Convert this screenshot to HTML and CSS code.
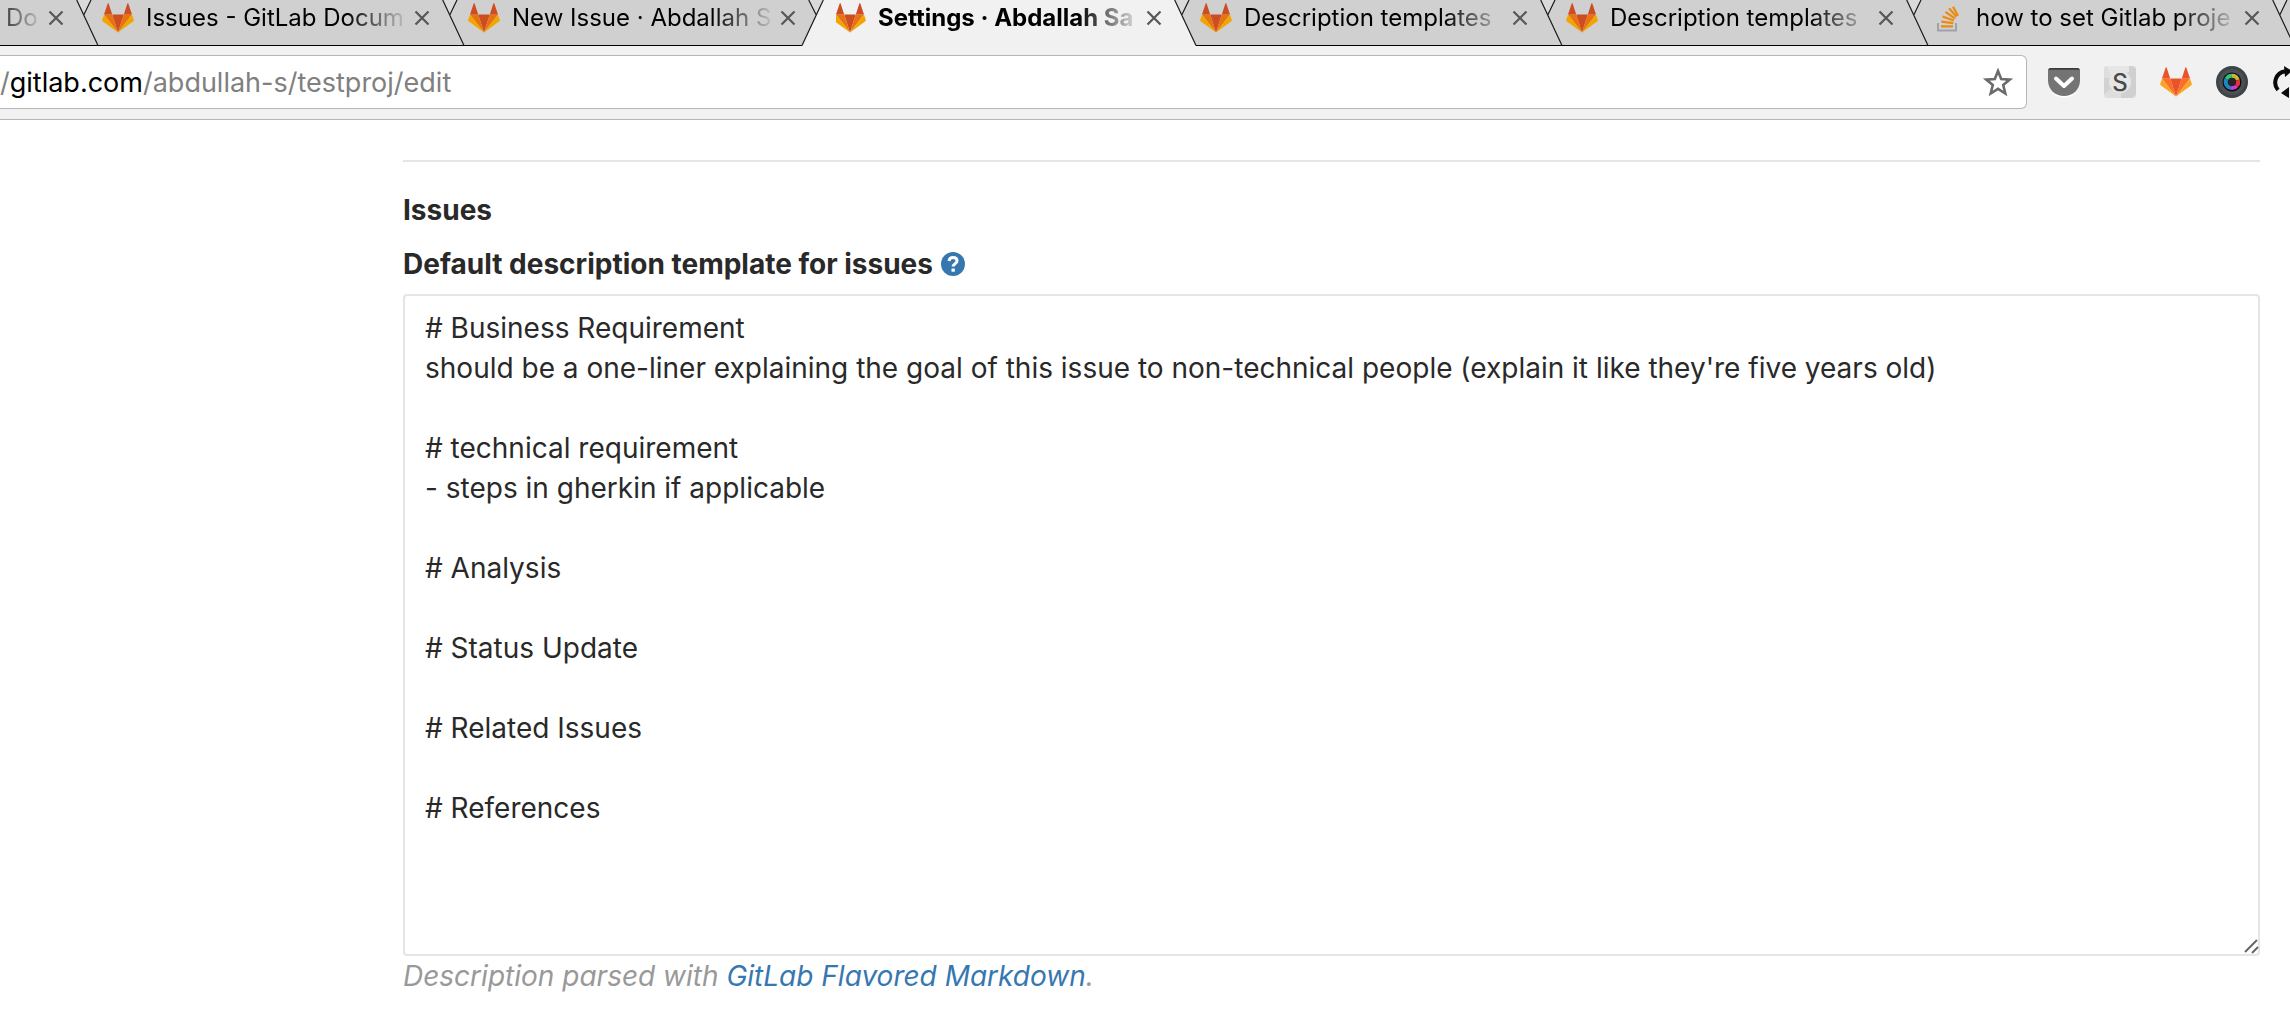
FILE: index.html
```
<!DOCTYPE html>
<html lang="en">
<head>
<meta charset="utf-8">
<title>Settings · Abdallah Samman / testproj · GitLab</title>
<link rel="stylesheet" href="styles.css">
</head>
<body>
<svg class="defs" aria-hidden="true">
  <symbol id="fox" viewBox="0 0 32 30">
    <path fill="var(--fox-dark)" d="M16 29.500 10.200 11.500H21.800z"/>
    <path fill="var(--fox-mid)" d="M16 29.500 10.200 11.500H2L16 29.500zM16 29.500 21.800 11.500H30z"/>
    <path fill="var(--fox-light)" d="M2 11.500.200 16.900c-.2.500 0 1 .4 1.300L16 29.500zM30 11.500l1.800 5.400c.2.500 0 1-.4 1.300L16 29.500z"/>
    <path fill="var(--fox-dark)" d="M2 11.500h8.200L6.700.700c-.2-.5-.9-.5-1.100 0zM30 11.500h-8.200L25.300.700c.2-.5.900-.5 1.100 0z"/>
  </symbol>
  <symbol id="close" viewBox="0 0 16 16">
    <path d="M1.500 1.500l13 13M14.500 1.500l-13 13" fill="none" stroke="#575757" stroke-width="2.200"/>
  </symbol>
  <symbol id="edge" viewBox="-20 0 40 46">
    <path d="M-7.300 0H7L0 14.500z" fill="#dadada"/>
    <path d="M-7.300 0 14 45.500M7 0 0 14.500" fill="none" stroke="#1a1a1a" stroke-width="1.200"/>
  </symbol>
  <symbol id="edge-open" viewBox="-20 0 40 46">
    <path d="M7.300 0-14 45.500V46H20V0z" fill="#f1f1f1"/>
    <path d="M-7.300 0H7L0 14.500z" fill="#dadada"/>
    <path d="M7.300 0-14 45.500M-7.300 0 0 14.500" fill="none" stroke="#1a1a1a" stroke-width="1.200"/>
  </symbol>
  <symbol id="edge-shut" viewBox="-20 0 40 46">
    <path d="M-20 0H-7.300L14 45.500V46H-20z" fill="#f1f1f1"/>
    <path d="M-7.300 0H7L0 14.500z" fill="#dadada"/>
    <path d="M-7.300 0 14 45.500M7 0 0 14.500" fill="none" stroke="#1a1a1a" stroke-width="1.200"/>
  </symbol>
  <symbol id="stack" viewBox="0 0 22 26">
    <path d="M1 17v7.500h18V17" fill="none" stroke="#9fa2ad" stroke-width="2"/>
    <path d="M4 20.300h12M4.300 15.600l12 1.500M5.500 10.500l11.300 4M8.500 5.800l9.500 6.800M12 2.300l7.500 8.500M16 .8l5 9" fill="none" stroke="#ec8b12" stroke-width="2.200"/>
  </symbol>
</svg>

<header class="browser">
  <nav class="tabs" aria-label="Open tabs">
    <div class="tab tab-cut">
      <a class="tab-title" href="#">Do</a>
      <button class="tab-close" aria-label="Close tab"><svg><use href="#close"/></svg></button>
    </div>
    <div class="tab">
      <svg class="edge"><use href="#edge"/></svg>
      <svg class="tab-icon"><use href="#fox"/></svg>
      <a class="tab-title" href="#">Issues - GitLab Docum</a>
      <button class="tab-close" aria-label="Close tab"><svg><use href="#close"/></svg></button>
    </div>
    <div class="tab">
      <svg class="edge"><use href="#edge"/></svg>
      <svg class="tab-icon"><use href="#fox"/></svg>
      <a class="tab-title" href="#">New Issue · Abdallah S</a>
      <button class="tab-close" aria-label="Close tab"><svg><use href="#close"/></svg></button>
    </div>
    <div class="tab tab-active">
      <svg class="edge"><use href="#edge-open"/></svg>
      <svg class="tab-icon"><use href="#fox"/></svg>
      <a class="tab-title" href="#" aria-current="page">Settings · Abdallah Sa</a>
      <button class="tab-close" aria-label="Close tab"><svg><use href="#close"/></svg></button>
    </div>
    <div class="tab">
      <svg class="edge"><use href="#edge-shut"/></svg>
      <svg class="tab-icon"><use href="#fox"/></svg>
      <a class="tab-title" href="#">Description templates</a>
      <button class="tab-close" aria-label="Close tab"><svg><use href="#close"/></svg></button>
    </div>
    <div class="tab">
      <svg class="edge"><use href="#edge"/></svg>
      <svg class="tab-icon"><use href="#fox"/></svg>
      <a class="tab-title" href="#">Description templates</a>
      <button class="tab-close" aria-label="Close tab"><svg><use href="#close"/></svg></button>
    </div>
    <div class="tab">
      <svg class="edge"><use href="#edge"/></svg>
      <svg class="tab-icon tab-icon-stack"><use href="#stack"/></svg>
      <a class="tab-title" href="#">how to set Gitlab proje</a>
      <button class="tab-close" aria-label="Close tab"><svg><use href="#close"/></svg></button>
    </div>
    <div class="tab tab-rest">
      <svg class="edge"><use href="#edge"/></svg>
    </div>
  </nav>

  <div class="toolbar">
    <div class="omnibox">
      <div class="url" role="textbox" contenteditable="true" spellcheck="false" aria-label="Address">/<span class="url-host">gitlab.com</span>/abdullah-s/testproj/edit</div>
      <button class="tool" aria-label="Bookmark this page">
        <svg viewBox="0 0 32 32"><path d="M16 5l3.200 8 8.600.6-6.600 5.500 2.100 8.400L16 22.900l-7.300 4.600 2.100-8.400-6.600-5.500 8.600-.6z" fill="none" stroke="#6b6b6b" stroke-width="2.600"/></svg>
      </button>
    </div>
    <div class="extensions">
      <button class="tool" aria-label="Save to Pocket">
        <svg viewBox="0 0 32 32"><path d="M0 15.500C0 24.500 7 31.500 16 31.500s16-7 16-16V14H0z" fill="#fff"/><path d="M0 5Q0 2 3 2H29Q32 2 32 5V14.500C32 23.500 25 30 16 30S0 23.500 0 14.500z" fill="#747474"/><path d="M0 5Q0 2 3 2H29Q32 2 32 5V3.800H0z" fill="#3c3c3c"/><path d="M8 12.500l8 7.500 8-7.500" fill="none" stroke="#fff" stroke-width="4" stroke-linecap="round" stroke-linejoin="round"/></svg>
      </button>
      <button class="tool" aria-label="S extension">
        <svg viewBox="0 0 32 32"><rect width="32" height="32" rx="3" fill="#dedede"/><path d="M21 0h8l3 3v25l-4 4H17z" fill="#d0d0d0"/><path d="M0 12h8v10l-8 6z" fill="#d2d2d2"/><path d="M3 0h22v6L8 12z" fill="#e6e6e6"/><circle cx="16" cy="16" r="11" fill="#e6e6e6"/><text class="s-mark" x="16" y="25" text-anchor="middle">S</text></svg>
      </button>
      <button class="tool tool-fox" aria-label="GitLab">
        <svg><use href="#fox"/></svg>
      </button>
      <button class="tool" aria-label="Camera">
        <svg viewBox="0 0 32 32"><circle cx="16" cy="16" r="16" fill="#3e4347"/><circle cx="16" cy="16" r="13" fill="#4b5055"/><circle cx="16" cy="16" r="9.500" fill="#0b0d12"/><g fill="none" stroke-width="4"><path d="M10.500 13A6 6 0 0 1 16 9.800" stroke="#35c46b"/><path d="M16 9.800A6 6 0 0 1 21.800 14" stroke="#c5b53a"/><path d="M21.800 14A6 6 0 0 1 20.500 20" stroke="#e5303f"/><path d="M20.500 20A6 6 0 0 1 15 21.900" stroke="#d33ad0"/><path d="M15 21.900A6 6 0 0 1 10.500 13" stroke="#1d87c4"/></g><circle cx="16" cy="16" r="4" fill="#2a2226"/></svg>
      </button>
      <button class="tool" aria-label="Sync">
        <svg viewBox="0 0 32 32"><path d="M6 24A11.500 11.500 0 0 1 13 5.200M26 8A11.500 11.500 0 0 1 19 27" fill="none" stroke="#0a0a0a" stroke-width="4"/><path d="M12 0l8 5-7 6zM17 21l-8 6 8 5z" fill="#0a0a0a"/></svg>
      </button>
    </div>
  </div>
</header>

<main class="settings">
  <h2 class="section-title">Issues</h2>
  <div class="label-row">
    <label for="template">Default description template for issues</label>
    <a class="help" href="#" aria-label="Help">
      <svg viewBox="0 0 24 24"><circle cx="12" cy="12" r="12" fill="#3777b0"/><path d="M8 9C8.300 6.600 9.800 5.600 12 5.600S16 6.800 16 8.900C16 11.600 12.200 11.600 12.200 14.600" fill="none" stroke="#fff" stroke-width="3"/><path d="M10.500 16.500h3.300v3.200h-3.300z" fill="#fff"/></svg>
    </a>
  </div>
  <div class="field">
    <textarea id="template" spellcheck="false"># Business Requirement
should be a one-liner explaining the goal of this issue to non-technical people (explain it like they're five years old)

# technical requirement
- steps in gherkin if applicable

# Analysis

# Status Update

# Related Issues

# References</textarea>
    <svg class="grip" viewBox="0 0 16 16" aria-hidden="true"><path d="M2 14 14 2M9 15l6-6" fill="none" stroke="#666" stroke-width="2"/></svg>
  </div>
  <p class="hint">Description parsed with <a href="#">GitLab Flavored Markdown</a>.</p>
</main>
</body>
</html>
```
FILE: styles.css
```
* {
  box-sizing: border-box;
}

body {
  margin: 0;
  background: #fff;
  color: #292929;
  font: 28px/40px Inter, "Liberation Sans", sans-serif;
  --fox-dark: #ce4c21;
  --fox-mid: #e67310;
  --fox-light: #f2a500;
}

button {
  display: block;
  padding: 0;
  border: 0;
  background: none;
}

svg {
  display: block;
}

.defs {
  display: none;
}

/* Tab strip */
.tabs {
  display: flex;
  height: 46px;
  overflow: hidden;
  background: #d0d0d0;
}

.tab {
  position: relative;
  display: flex;
  flex: none;
  align-items: flex-start;
  width: 366px;
  padding: 0 20px 0 18px;
  border-bottom: 1px solid #000;
}

.tab-cut {
  width: 84px;
  padding-left: 6px;
}

.tab-rest {
  flex: 1 0 0;
  width: auto;
  padding: 0;
}

.tab-active {
  background: #f1f1f1;
  border-color: #f1f1f1;
}

.edge {
  position: absolute;
  top: 0;
  left: -20px;
  width: 40px;
  height: 46px;
}

.tab-icon {
  flex: none;
  width: 32px;
  height: 30px;
  margin: 3px 12px 0 0;
}

.tab-icon-stack {
  width: 22px;
  height: 26px;
  margin: 6px 17px 0 5px;
}

.tab-title {
  flex: 1;
  min-width: 0;
  overflow: hidden;
  color: #000;
  font-size: 24px;
  line-height: 36px;
  white-space: nowrap;
  text-decoration: none;
  mask-image: linear-gradient(to left, transparent, #000 64px);
}

.tab-cut .tab-title {
  mask-image: linear-gradient(to left, transparent, #000 56px);
}

.tab-active .tab-title {
  font-weight: 700;
}

.tab-close {
  flex: none;
  margin: 10px 0 0 4px;
}

.tab-close svg {
  width: 16px;
  height: 16px;
}

/* Address bar and extensions */
.toolbar {
  display: flex;
  align-items: center;
  gap: 21px;
  height: 74px;
  padding: 0 0 2px;
  overflow: hidden;
  border-bottom: 1px solid #b6b6b6;
  background: #f1f1f1;
}

.omnibox {
  display: flex;
  flex: 1;
  align-items: center;
  height: 54px;
  padding-right: 12px;
  border: 1px solid #b6b6b6;
  border-left: 0;
  border-radius: 0 6px 6px 0;
  background: #fff;
}

.url {
  flex: 1;
  padding-top: 2px;
  outline: 0;
  color: #808080;
  font-size: 27px;
  white-space: nowrap;
}

.url-host {
  color: #000;
}

.extensions {
  display: flex;
  gap: 24px;
  margin-right: -14px;
}

.tool svg {
  width: 32px;
  height: 32px;
}

.tool-fox {
  --fox-dark: #e8532b;
  --fox-mid: #fc6d26;
  --fox-light: #fca326;
}

.s-mark {
  fill: #4a4a4a;
  font: 500 24px Inter, sans-serif;
}

/* Settings form */
.settings {
  margin: 40px 30px 0 403px;
  padding-top: 28px;
  border-top: 2px solid #e5e5e5;
}

.section-title {
  margin: 0 0 14px;
  font-size: 28px;
  font-weight: 700;
  line-height: 40px;
}

.label-row {
  display: flex;
  align-items: center;
  gap: 8px;
  margin-bottom: 10px;
  font-weight: 700;
}

.help svg {
  width: 24px;
  height: 24px;
}

.field {
  position: relative;
}

textarea {
  display: block;
  width: 100%;
  height: 662px;
  padding: 12px 20px;
  border: 2px solid #e5e5e5;
  border-radius: 4px;
  outline: 0;
  background: #fff;
  color: inherit;
  font: inherit;
  resize: none;
}

.grip {
  position: absolute;
  right: 1px;
  bottom: 2px;
  width: 16px;
  height: 16px;
}

.hint {
  margin: 0;
  color: #999;
  font-style: italic;
}

.hint a {
  color: #3777b0;
  text-decoration: none;
}
```
